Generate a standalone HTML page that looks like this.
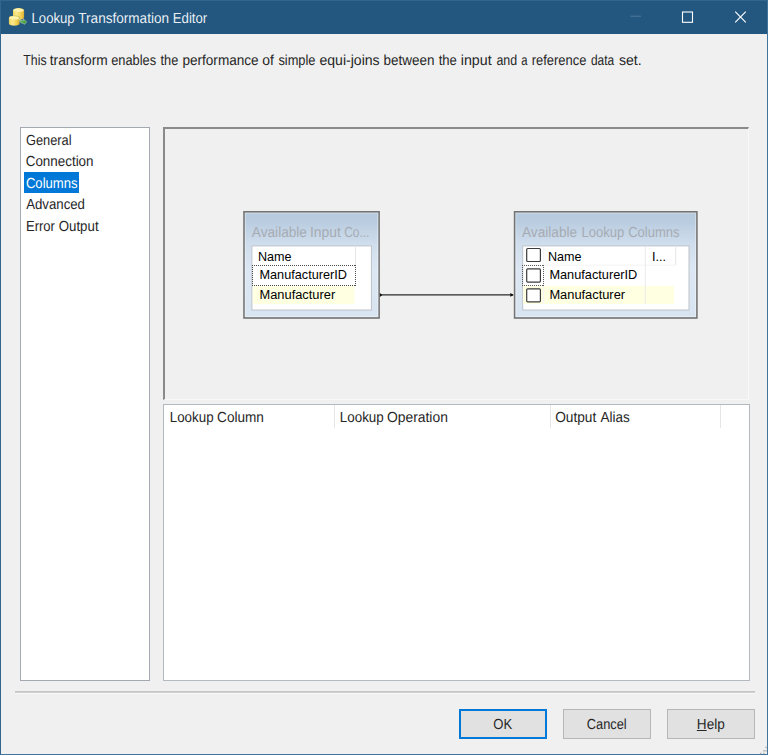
<!DOCTYPE html>
<html><head><meta charset="utf-8">
<style>
html,body{margin:0;padding:0;}
body{width:768px;height:755px;overflow:hidden;background:#f0f0f0;font-family:"Liberation Sans",sans-serif;color:#000;position:relative;}
.abs{position:absolute;}
.t{position:absolute;white-space:nowrap;line-height:1;}
#win{left:0;top:0;width:766px;height:753px;border:1px solid #33658f;border-right-color:#42739c;border-bottom-color:#42739c;background:#f0f0f0;}
#title{left:1px;top:1px;width:766px;height:33px;background:#23577f;}
</style></head><body>
<div id="win" class="abs"></div>
<div id="title" class="abs"></div>
<!-- icon -->
<svg class="abs" style="left:0;top:0" width="40" height="34" viewBox="0 0 40 34">
 <defs>
  <linearGradient id="g1" x1="0" x2="1"><stop offset="0" stop-color="#f2d65a"/><stop offset=".35" stop-color="#f9e88c"/><stop offset=".7" stop-color="#f1d354"/><stop offset="1" stop-color="#d9ad33"/></linearGradient>
  <linearGradient id="g2" x1="0" y1="0" x2="1" y2="1"><stop offset="0" stop-color="#8fd07a"/><stop offset=".5" stop-color="#4fa83e"/><stop offset="1" stop-color="#2f8a2c"/></linearGradient>
 </defs>
 <path d="M13 10.200v7.400a5.550 2.200 0 0 0 11.100 0v-7.400a5.550 2.200 0 0 0 -11.100 0z" fill="url(#g1)"/>
 <ellipse cx="18.550" cy="10.200" rx="5.100" ry="1.700" fill="#fcf1ae"/>
 <path d="M8.900 17.900v5.700a5.350 2.100 0 0 0 10.700 0v-5.700a5.350 2.100 0 0 0 -10.700 0z" fill="url(#g1)" stroke="#23557f" stroke-opacity=".25" stroke-width=".5"/>
 <ellipse cx="14.250" cy="17.900" rx="4.900" ry="1.600" fill="#fcf1ae"/>
 <path d="M19.300 18.800C19.900 20.500 21.600 21.100 23.500 20.500L23.200 18.800L26.700 21.900L24.300 24.500L23.900 23.100C21.300 23.900 19.400 22.100 19.300 18.800Z" fill="url(#g2)" stroke="#e9f5e4" stroke-opacity=".7" stroke-width=".6"/>
</svg>
<!-- caption buttons -->
<svg class="abs" style="left:620px;top:1px" width="147" height="33" viewBox="0 0 147 33">
 <path d="M10.500 15.200h10.500" stroke="#4d7698" stroke-width="1.100"/>
 <rect x="62.500" y="11" width="10" height="10.300" fill="none" stroke="#fff" stroke-width="1.100"/>
 <path d="M115.200 10.700l10.600 10.600M125.800 10.700l-10.600 10.600" stroke="#fff" stroke-width="1.150"/>
</svg>

<!-- left list -->
<div class="abs" style="left:20px;top:127px;width:128px;height:552px;border:1px solid #a4a9b1;background:#fff;"></div>
<div class="abs" style="left:24px;top:172px;width:55px;height:21px;background:#0078d7;"></div>

<!-- upper panel -->
<div class="abs" style="left:163px;top:127px;width:583px;height:270px;border-left:2px solid #8a8a8a;border-top:2px solid #8a8a8a;border-right:1px solid #f8f8f8;border-bottom:1px solid #f8f8f8;background:#f0f0f0;"></div>

<!-- left box -->
<svg class="abs" style="left:0;top:0" width="768" height="755" viewBox="0 0 768 755">
 <defs>
  <linearGradient id="bx" x1="0" y1="0" x2="0" y2="1">
   <stop offset="0" stop-color="#b6c9dd"/><stop offset=".1" stop-color="#bacde0"/><stop offset=".3" stop-color="#cfddec"/><stop offset=".55" stop-color="#dce7f3"/><stop offset="1" stop-color="#d8e4f1"/>
  </linearGradient>
 </defs>
 <!-- left -->
 <rect x="244" y="211.800" width="135.100" height="106.200" fill="url(#bx)" stroke="#747474" stroke-width="1.600"/>
 <rect x="245.300" y="213.100" width="132.500" height="103.300" fill="none" stroke="#fff" stroke-opacity=".35" stroke-width="1"/>
 <rect x="251.900" y="245.900" width="119.500" height="64.100" fill="#fff" stroke="#bec3ca" stroke-width="1"/>
 <rect x="252.900" y="285.900" width="101.700" height="18.200" fill="#ffffe1"/>
 <path d="M355.500 247v18" stroke="#e6e6e6" stroke-width="1"/>
 <path d="M252 265.500H356M252 285.500H356M252.500 265V286M355.500 265V286" fill="none" stroke="#4a4a4a" stroke-width="1" stroke-dasharray="1 1"/>
 <!-- connector -->
 <path d="M380 294.900H513" stroke="#2a2a2a" stroke-width="1.200"/>
 <path d="M379.900 292.900l2.400 2l-2.400 2z" fill="#111"/>
 <path d="M510.300 293l3.600 1.900l-3.600 1.900z" fill="#111"/>
 <!-- right -->
 <rect x="514.600" y="211.800" width="182.300" height="106.200" fill="url(#bx)" stroke="#747474" stroke-width="1.600"/>
 <rect x="515.900" y="213.100" width="179.700" height="103.300" fill="none" stroke="#fff" stroke-opacity=".35" stroke-width="1"/>
 <rect x="522.700" y="245.900" width="166.300" height="64.100" fill="#fff" stroke="#bec3ca" stroke-width="1"/>
 <rect x="523.200" y="285.800" width="151" height="18.200" fill="#ffffe1"/>
 <path d="M523.500 265.200H675" stroke="#f3f3f3" stroke-width="1"/>
 <path d="M645.300 247v57" stroke="#ececec" stroke-width="1"/>
 <path d="M675.700 247v18" stroke="#e6e6e6" stroke-width="1"/>
 <path d="M543.500 247v57" stroke="#f6f6f6" stroke-width="1"/>
 <rect x="526.700" y="248.500" width="13.700" height="13" rx="1" fill="#fff" stroke="#3c3c3c" stroke-width="1.200"/>
 <rect x="526.700" y="268.900" width="13.700" height="13.200" rx="1" fill="#fff" stroke="#3c3c3c" stroke-width="1.200"/>
 <rect x="526.700" y="288.800" width="13.700" height="13" rx="1" fill="#fff" stroke="#3c3c3c" stroke-width="1.200"/>
 <path d="M522 265.500H544M522 285.500H544M522.500 265V286M543.500 265V286" fill="none" stroke="#5a5a5a" stroke-width="1" stroke-dasharray="1 1"/>
</svg>
<div class="t in" style="left:258px;top:251px;">Name</div>
<div class="t in" style="left:259.500px;top:269px;font-size:12.7px">ManufacturerID</div>
<div class="t in" style="left:259.500px;top:289px;font-size:12.85px">Manufacturer</div>
<div class="t in" style="left:548px;top:251px;">Name</div>
<div class="t in" style="left:549.400px;top:269px;font-size:12.75px">ManufacturerID</div>
<div class="t in" style="left:549.400px;top:289px;font-size:12.85px">Manufacturer</div>
<div class="t in" style="left:652px;top:251px;">I...</div>

<!-- lower grid -->
<div class="abs" style="left:163px;top:404px;width:585px;height:275px;border:1px solid #b4b8bf;background:#fff;"></div>
<div class="abs" style="left:334px;top:405px;width:1px;height:23px;background:#e5e5e5;"></div>
<div class="abs" style="left:550px;top:405px;width:1px;height:23px;background:#e5e5e5;"></div>
<div class="abs" style="left:720px;top:405px;width:1px;height:23px;background:#e5e5e5;"></div>

<!-- separator -->
<div class="abs" style="left:15px;top:691px;width:740px;height:1px;background:#c6c6c6;"></div>
<div class="abs" style="left:15px;top:692px;width:740px;height:1px;background:#cfcfcf;border-bottom:1px solid #f9f9f9;"></div>

<!-- buttons -->
<div class="abs btn" style="left:459px;top:709px;width:84px;height:26px;border:2px solid #0078d7;"></div>
<div class="abs btn" style="left:563px;top:709px;width:86px;height:28px;border:1px solid #b6b6b6;"></div>
<div class="abs btn" style="left:667px;top:709px;width:86px;height:28px;border:1px solid #b6b6b6;"></div>
<style>
.in{font-size:12.6px;color:#000;}
.ph{position:absolute;left:0;top:0;}
.w{text-rendering:geometricPrecision;position:absolute;left:0;top:0;white-space:nowrap;line-height:1;font-size:14.6px;transform-origin:0 0;}
.cb{width:13px;height:12px;border:1px solid #444;border-radius:1px;background:#fff;}
.box{border:1px solid #6c6c6c;box-shadow:inset 0 0 0 1px rgba(255,255,255,.35);background:linear-gradient(#b5c9dd 0px,#b9cce0 8px,#d0deec 28px,#dde8f4 55px,#d8e4f1 105px);}
.bt{font-size:14.6px;color:#a2a9b2;transform:scaleX(.918);transform-origin:0 0;}
.btn{background:#e1e1e1;display:flex;align-items:center;justify-content:center;font-size:14.6px;}
.btn span{position:relative;top:0px;display:inline-block;transform:scaleX(.918);}
</style>
<svg class="abs" style="left:755px;top:742px" width="12" height="12" viewBox="0 0 12 12"><g fill="#b5b5b5"><rect x="8.200" y="8" width="1.600" height="1.600"/><rect x="10.300" y="4.600" width="1.400" height="1.600"/><rect x="5" y="10.800" width="1.600" height="1.200"/><rect x="8.200" y="10.800" width="1.600" height="1.200"/><rect x="10.300" y="8" width="1.400" height="1.600"/></g></svg>
<!--TXT-->
<div class="ph">
<span class="w" style="transform:translate(31.47px,12px) scaleX(0.9029);color:rgba(255,255,255,.92)">Lookup</span>
<span class="w" style="transform:translate(78.28px,12px) scaleX(0.9296);color:rgba(255,255,255,.92)">Transformation</span>
<span class="w" style="transform:translate(172.75px,12px) scaleX(0.9046);color:rgba(255,255,255,.92)">Editor</span>
</div>
<div class="ph">
<span class="w" style="transform:translate(23.33px,54px) scaleX(0.8420);color:#262626">This</span>
<span class="w" style="transform:translate(49.74px,54px) scaleX(0.9420);color:#262626">transform</span>
<span class="w" style="transform:translate(111.13px,54px) scaleX(0.8790);color:#262626">enables</span>
<span class="w" style="transform:translate(160.56px,54px) scaleX(0.8762);color:#262626">the</span>
<span class="w" style="transform:translate(182.39px,54px) scaleX(0.9312);color:#262626">performance</span>
<span class="w" style="transform:translate(262.28px,54px) scaleX(0.9546);color:#262626">of</span>
<span class="w" style="transform:translate(278.42px,54px) scaleX(0.8790);color:#262626">simple</span>
<span class="w" style="transform:translate(319.46px,54px) scaleX(0.9636);color:#262626">equi-joins</span>
<span class="w" style="transform:translate(383.55px,54px) scaleX(0.9230);color:#262626">between</span>
<span class="w" style="transform:translate(438.66px,54px) scaleX(0.8972);color:#262626">the</span>
<span class="w" style="transform:translate(460.77px,54px) scaleX(0.9743);color:#262626">input</span>
<span class="w" style="transform:translate(496.47px,54px) scaleX(0.8484);color:#262626">and</span>
<span class="w" style="transform:translate(521.13px,54px) scaleX(0.7718);color:#262626">a</span>
<span class="w" style="transform:translate(531.69px,54px) scaleX(0.8864);color:#262626">reference</span>
<span class="w" style="transform:translate(590.90px,54px) scaleX(0.8159);color:#262626">data</span>
<span class="w" style="transform:translate(618.88px,54px) scaleX(0.9659);color:#262626">set.</span>
</div>
<div class="ph">
<span class="w" style="transform:translate(25.94px,134px) scaleX(0.8792);color:#262626">General</span>
</div>
<div class="ph">
<span class="w" style="transform:translate(25.75px,155px) scaleX(0.9178);color:#262626">Connection</span>
</div>
<div class="ph">
<span class="w" style="transform:translate(25.90px,177px) scaleX(0.8974);color:#fff">Columns</span>
</div>
<div class="ph">
<span class="w" style="transform:translate(26.16px,198px) scaleX(0.9061);color:#262626">Advanced</span>
</div>
<div class="ph">
<span class="w" style="transform:translate(25.92px,220px) scaleX(0.8959);color:#262626">Error</span>
<span class="w" style="transform:translate(58.72px,220px) scaleX(0.9096);color:#262626">Output</span>
</div>
<div class="ph">
<span class="w" style="transform:translate(251.86px,226px) scaleX(0.9343);color:#a6abb3">Available</span>
<span class="w" style="transform:translate(309.88px,226px) scaleX(0.9505);color:#a6abb3">Input</span>
<span class="w" style="transform:translate(344.21px,226px) scaleX(0.8162);color:#a6abb3">Co...</span>
</div>
<div class="ph">
<span class="w" style="transform:translate(522.02px,226px) scaleX(0.9347);color:#a6abb3">Available</span>
<span class="w" style="transform:translate(581.45px,226px) scaleX(0.8926);color:#a6abb3">Lookup</span>
<span class="w" style="transform:translate(628.18px,226px) scaleX(0.8902);color:#a6abb3">Columns</span>
</div>
<div class="ph">
<span class="w" style="transform:translate(169.75px,411px) scaleX(0.9158);color:#262626">Lookup</span>
<span class="w" style="transform:translate(217.08px,411px) scaleX(0.9313);color:#262626">Column</span>
</div>
<div class="ph">
<span class="w" style="transform:translate(339.79px,411px) scaleX(0.9185);color:#262626">Lookup</span>
<span class="w" style="transform:translate(386.94px,411px) scaleX(0.9510);color:#262626">Operation</span>
</div>
<div class="ph">
<span class="w" style="transform:translate(555.13px,411px) scaleX(0.9395);color:#262626">Output</span>
<span class="w" style="transform:translate(600.62px,411px) scaleX(0.9223);color:#262626">Alias</span>
</div>
<div class="ph">
<span class="w" style="transform:translate(493.37px,718px) scaleX(0.8961);color:#262626">OK</span>
</div>
<div class="ph">
<span class="w" style="transform:translate(586.81px,718px) scaleX(0.8784);color:#262626">Cancel</span>
</div>
<div class="ph">
<span class="w" style="transform:translate(696.83px,718px) scaleX(0.9309);color:#262626"><u>H</u>elp</span>
</div>
<!--/TXT-->
</body></html>
